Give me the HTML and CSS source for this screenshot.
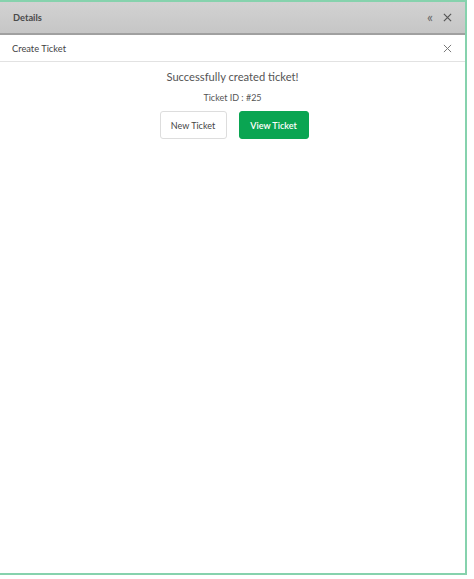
FILE: index.html
```html
<!DOCTYPE html>
<html>
<head>
<meta charset="utf-8">
<link rel="stylesheet" href="styles.css">
</head>
<body>
<div class="panel">
  <div class="header">
    <span class="title">Details</span>
    <div class="actions">
      <span class="icon chev">&laquo;</span>
      <svg class="icon x" width="9" height="9" viewBox="0 0 10 10"><path d="M1 1L9 9M9 1L1 9" stroke="#555" stroke-width="1.3" fill="none"/></svg>
    </div>
  </div>
  <div class="subheader">
    <span class="subtitle">Create Ticket</span>
    <svg class="icon x" width="9" height="9" viewBox="0 0 10 10"><path d="M1 1L9 9M9 1L1 9" stroke="#777" stroke-width="1.1" fill="none"/></svg>
  </div>
  <div class="content">
    <div class="msg">Successfully created ticket!</div>
    <div class="tid">Ticket ID : #25</div>
    <div class="buttons">
      <button class="btn btn-default">New Ticket</button>
      <button class="btn btn-primary">View Ticket</button>
    </div>
  </div>
</div>
</body>
</html>
```
FILE: styles.css
```css
html, body { margin: 0; padding: 0; background: #fff; }
body { font-family: Lato, "Open Sans", sans-serif; color: #444; }
.panel {
  box-sizing: border-box;
  width: 467px;
  height: 575px;
  border: 2px solid #86d2ad;
  border-left: none;
  display: flex;
  flex-direction: column;
  background: #fff;
}
.header {
  height: 31px;
  background: linear-gradient(#d2d2d2, #c6c6c6);
  border-bottom: 2px solid #a0a0a0;
  display: flex;
  align-items: center;
  justify-content: space-between;
  padding: 0 13px 0 13px;
  flex-shrink: 0;
}
.title { font-size: 9.3px; font-weight: bold; color: #4a4a4a; }
.actions { display: flex; align-items: center; gap: 10px; }
.chev { font-size: 14px; color: #666; line-height: 1; position: relative; top: -1px; }
.subheader {
  height: 26px;
  border-bottom: 1px solid #e2e2e2;
  display: flex;
  align-items: center;
  justify-content: space-between;
  padding: 0 13px 0 12px;
  flex-shrink: 0;
}
.subtitle { font-size: 9.3px; color: #444; }
.content {
  display: flex;
  flex-direction: column;
  align-items: center;
  padding-top: 8px;
}
.msg { font-size: 11.2px; color: #555; line-height: 14px; }
.tid { font-size: 9px; color: #555; margin-top: 8px; line-height: 12px; }
.buttons { display: flex; gap: 12px; margin-top: 7px; margin-left: 3px; }
.btn {
  font-family: Lato, "Open Sans", sans-serif;
  font-size: 9px;
  height: 28px;
  border-radius: 3px;
  padding: 0;
  white-space: nowrap;
  cursor: pointer;
}
.btn-default { background: #fff; border: 1px solid #ddd; color: #444; width: 67px; }
.btn-primary { background: #0aa552; border: 1px solid #0aa552; color: #fff; width: 70px; font-weight: 600; }
```
